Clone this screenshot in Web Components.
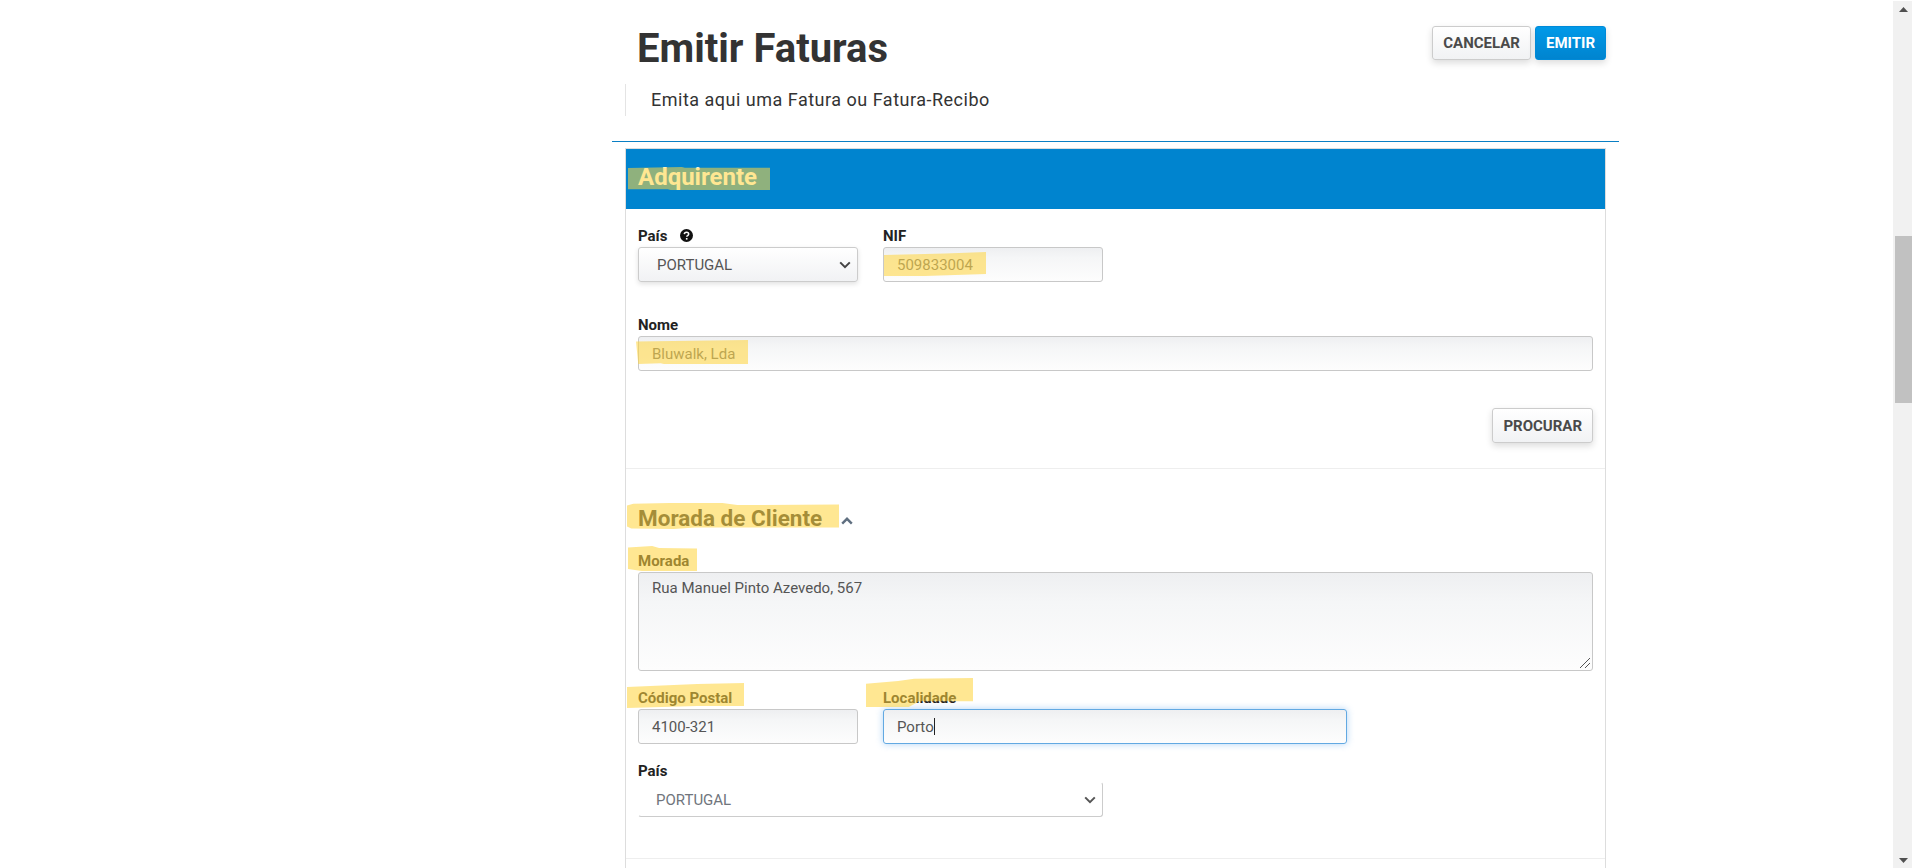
<!DOCTYPE html>
<html lang="pt">
<head>
<meta charset="utf-8">
<title>Emitir Faturas</title>
<style>
  html, body { margin: 0; padding: 0; height: 100%; background: #fff; overflow: hidden; }
  body { font-family: Roboto, "Liberation Sans", sans-serif; }
</style>
</head>
<body>
<app-page>
  <page-header title="Emitir Faturas" subtitle="Emita aqui uma Fatura ou Fatura-Recibo">
    <ui-button>Cancelar</ui-button>
    <ui-button primary>Emitir</ui-button>
  </page-header>

  <form-card heading="Adquirente">
    <form-row top="16">
      <form-field label="País" help width="220"><select-box>PORTUGAL</select-box></form-field>
      <form-field label="NIF" width="220"><text-box muted>509833004</text-box></form-field>
    </form-row>
    <form-row top="32">
      <form-field label="Nome" grow><text-box muted>Bluwalk, Lda</text-box></form-field>
    </form-row>
    <form-actions><ui-button tall>Procurar</ui-button></form-actions>

    <section-title>Morada de Cliente</section-title>
    <form-row top="17">
      <form-field label="Morada" grow><text-area-box>Rua Manuel Pinto Azevedo, 567</text-area-box></form-field>
    </form-row>
    <form-row top="16">
      <form-field label="Código Postal" width="220"><text-box>4100-321</text-box></form-field>
      <form-field label="Localidade" width="464"><text-box focused>Porto</text-box></form-field>
    </form-row>
    <form-row top="16">
      <form-field label="País" width="465"><select-box flat>PORTUGAL</select-box></form-field>
    </form-row>
    <form-rule></form-rule>
  </form-card>

  <mark-stroke slot="marks" x="628" y="167" w="142" h="23" points="0 4,38 0,40 3,100 3,100 100,30 100,28 97,0 97"></mark-stroke>
  <mark-stroke slot="marks" x="884" y="252" w="102" h="24" points="0 12,60 6,100 0,100 92,40 100,0 100"></mark-stroke>
  <mark-stroke slot="marks" x="636" y="340" w="112" h="24" points="0 6,100 0,100 100,25 100,22 97,2 100"></mark-stroke>
  <mark-stroke slot="marks" x="627" y="503" w="212" h="26" points="0 10,3 3,20 0,45 0,52 8,100 6,100 94,32 94,22 100,2 98,0 90"></mark-stroke>
  <mark-stroke slot="marks" x="628" y="546" w="69" h="25" points="0 6,35 0,45 8,100 10,100 100,20 100,0 92"></mark-stroke>
  <mark-stroke slot="marks" x="627" y="683" w="117" h="25" points="0 16,60 4,100 0,100 92,60 92,0 100"></mark-stroke>
  <mark-stroke slot="marks" x="866" y="678" w="107" h="29" points="0 20,30 10,45 3,100 0,100 80,50 80,40 100,0 100"></mark-stroke>
</app-page>

<script>
const FONT = 'Roboto, "Liberation Sans", sans-serif';

class AppPage extends HTMLElement {
    constructor() {
        super();
        this.attachShadow({ mode: 'open' });
    }
    connectedCallback() {
        this.shadowRoot.innerHTML = `
            <style>
                :host { display: flex; height: 868px; overflow: hidden; position: relative; font-family: ${FONT}; }
                .content { flex: 1; min-width: 0; }
                .column { width: 981px; margin-left: 612px; padding: 0 13px; }
            </style>
            <div class="content"><div class="column"><slot></slot></div></div>
            <fake-scrollbar></fake-scrollbar>
            <slot name="marks"></slot>
        `;
    }
}
customElements.define('app-page', AppPage);

class PageHeader extends HTMLElement {
    constructor() {
        super();
        this.attachShadow({ mode: 'open' });
    }
    connectedCallback() {
        this.shadowRoot.innerHTML = `
            <style>
                :host { display: block; height: 141px; margin: 0 -13px 6px; padding: 0 13px; border-bottom: 1px solid #0a7fc4; }
                .top { display: flex; justify-content: space-between; height: 84px; }
                h1 { margin: 0; padding: 26px 0 0 12px; font-size: 40px; line-height: 46px; font-weight: 700; color: #333; }
                .actions { display: flex; gap: 4px; padding-top: 26px; height: 34px; }
                p { margin: 0; height: 32px; line-height: 32px; border-left: 1px solid #e4e4e4; padding-left: 25px; font-size: 18px; color: #333; letter-spacing: .5px; }
            </style>
            <div class="top">
                <h1>${this.getAttribute('title')}</h1>
                <div class="actions"><slot></slot></div>
            </div>
            <p>${this.getAttribute('subtitle')}</p>
        `;
    }
}
customElements.define('page-header', PageHeader);

class UiButton extends HTMLElement {
    constructor() {
        super();
        this.attachShadow({ mode: 'open' });
    }
    connectedCallback() {
        this.shadowRoot.innerHTML = `
            <style>
                :host { display: inline-flex; align-items: center; height: 34px; padding: 0 10px; box-sizing: border-box; border: 1px solid #ccc; border-radius: 3px;
                    background: linear-gradient(#fff, #f1f2f4); box-shadow: 0 3px 7px rgba(0,0,0,.14);
                    font-size: 15px; font-weight: 700; text-transform: uppercase; color: #4a4a4a; }
                :host([tall]) { height: 35px; }
                :host([primary]) { background: linear-gradient(#0099e8, #0084cf); border-color: #008ad8; color: #fff; }
            </style>
            <slot></slot>
        `;
    }
}
customElements.define('ui-button', UiButton);

class FormCard extends HTMLElement {
    constructor() {
        super();
        this.attachShadow({ mode: 'open' });
    }
    connectedCallback() {
        this.shadowRoot.innerHTML = `
            <style>
                :host { display: block; border: 1px solid #ddd; border-bottom: 0; }
                header { height: 60px; background: #0084cf; color: #fff; font-size: 24px; font-weight: 700; line-height: 56px; padding-left: 12px; }
                .body { padding: 0 12px; }
            </style>
            <header>${this.getAttribute('heading')}</header>
            <div class="body"><slot></slot></div>
        `;
    }
}
customElements.define('form-card', FormCard);

class FormRow extends HTMLElement {
    constructor() {
        super();
        this.attachShadow({ mode: 'open' });
    }
    connectedCallback() {
        const top = this.getAttribute('top') || 0;
        this.shadowRoot.innerHTML = `
            <style>
                :host { display: flex; gap: 25px; padding-top: ${top}px; }
            </style>
            <slot></slot>
        `;
    }
}
customElements.define('form-row', FormRow);

class FormField extends HTMLElement {
    constructor() {
        super();
        this.attachShadow({ mode: 'open' });
    }
    connectedCallback() {
        const width = this.getAttribute('width');
        const help = this.hasAttribute('help') ? `
            <svg width="13" height="13" viewBox="0 0 13 13" aria-hidden="true">
                <circle cx="6.5" cy="6.5" r="6.5" fill="#111"/>
                <path d="M4.3 5.1c.1-1.2 1-1.9 2.2-1.9s2.2.7 2.2 1.8c0 .9-.5 1.3-1.1 1.7-.5.3-.8.6-.8 1.1" fill="none" stroke="#fff" stroke-width="1.5"/>
                <rect x="5.9" y="9" width="1.6" height="1.6" fill="#fff"/>
            </svg>` : '';
        this.shadowRoot.innerHTML = `
            <style>
                :host { display: block; ${width ? `flex: 0 0 ${width}px;` : 'flex: 1;'} }
                label { display: flex; align-items: center; gap: 13px; height: 21px; margin-bottom: 1px; font-size: 15px; font-weight: 700; color: #222; }
            </style>
            <label>${this.getAttribute('label')}${help}</label>
            <slot></slot>
        `;
    }
}
customElements.define('form-field', FormField);

const INSET = 'linear-gradient(#eeeff1, #f5f6f7 30%, #fdfdfd)';

class TextBox extends HTMLElement {
    constructor() {
        super();
        this.attachShadow({ mode: 'open' });
    }
    connectedCallback() {
        const focused = this.hasAttribute('focused');
        this.shadowRoot.innerHTML = `
            <style>
                :host { display: flex; align-items: center; height: 35px; padding: 0 10px 0 13px; box-sizing: border-box; border: 1px solid #c8c8c8; border-radius: 3px;
                    background: ${INSET}; font-size: 15px; color: #555; }
                :host([muted]) { color: #6a6a6a; }
                :host([focused]) { border-color: #62a9e2; box-shadow: 0 0 7px rgba(80,160,235,.45); }
                i { display: inline-block; width: 1px; height: 17px; background: #222; }
            </style>
            <slot></slot>${focused ? '<i></i>' : ''}
        `;
    }
}
customElements.define('text-box', TextBox);

class TextAreaBox extends HTMLElement {
    constructor() {
        super();
        this.attachShadow({ mode: 'open' });
    }
    connectedCallback() {
        this.shadowRoot.innerHTML = `
            <style>
                :host { display: block; position: relative; height: 99px; padding: 5px 13px; box-sizing: border-box; border: 1px solid #c8c8c8; border-radius: 3px;
                    background: ${INSET}; font-size: 15px; line-height: 20px; color: #555; }
                svg { position: absolute; right: 2px; bottom: 2px; }
            </style>
            <slot></slot>
            <svg width="10" height="10" viewBox="0 0 10 10" aria-hidden="true">
                <path d="M0 10 10 0M5 10 10 5" stroke="#555" stroke-width="1" fill="none"/>
            </svg>
        `;
    }
}
customElements.define('text-area-box', TextAreaBox);

class SelectBox extends HTMLElement {
    constructor() {
        super();
        this.attachShadow({ mode: 'open' });
    }
    connectedCallback() {
        this.shadowRoot.innerHTML = `
            <style>
                :host { display: flex; align-items: center; justify-content: space-between; height: 35px; padding: 0 6px 0 18px; box-sizing: border-box; border: 1px solid #ccc; border-radius: 3px;
                    background: linear-gradient(#fff, #f1f2f4); box-shadow: 0 2px 5px rgba(0,0,0,.12); font-size: 15px; color: #555; }
                :host([flat]) { background: #fff; border-top-color: transparent; border-left-color: transparent; box-shadow: none; color: #70757c; padding-left: 17px; }
                :host([flat]) path { stroke: #555; }
            </style>
            <slot></slot>
            <svg width="12" height="8" viewBox="0 0 12 8" aria-hidden="true">
                <path d="M1.2 1.4 6 6.2l4.8-4.8" fill="none" stroke="#444" stroke-width="2"/>
            </svg>
        `;
    }
}
customElements.define('select-box', SelectBox);

class FormActions extends HTMLElement {
    constructor() {
        super();
        this.attachShadow({ mode: 'open' });
    }
    connectedCallback() {
        this.shadowRoot.innerHTML = `
            <style>
                :host { display: flex; justify-content: flex-end; padding: 37px 12px 25px; margin: 0 -12px; border-bottom: 1px solid #eee; }
            </style>
            <slot></slot>
        `;
    }
}
customElements.define('form-actions', FormActions);

class SectionTitle extends HTMLElement {
    constructor() {
        super();
        this.attachShadow({ mode: 'open' });
    }
    connectedCallback() {
        this.shadowRoot.innerHTML = `
            <style>
                :host { display: flex; gap: 19px; padding-top: 34px; height: 30px; font-size: 22.5px; line-height: 30px; font-weight: 700; color: #333; }
                svg { margin-top: 14px; }
            </style>
            <slot></slot>
            <svg width="12" height="8" viewBox="0 0 12 8" aria-hidden="true">
                <path d="M1.2 6.6 6 1.8l4.8 4.8" fill="none" stroke="#5f6f80" stroke-width="2.4"/>
            </svg>
        `;
    }
}
customElements.define('section-title', SectionTitle);

class FormRule extends HTMLElement {
    constructor() {
        super();
        this.attachShadow({ mode: 'open' });
    }
    connectedCallback() {
        this.shadowRoot.innerHTML = `
            <style>
                :host { display: block; margin: 41px -12px 0; height: 9px; border-top: 1px solid #eee; }
            </style>
        `;
    }
}
customElements.define('form-rule', FormRule);

// marcador amarelo por cima do texto, como no print original
class MarkStroke extends HTMLElement {
    constructor() {
        super();
        this.attachShadow({ mode: 'open' });
    }
    connectedCallback() {
        const attr = n => this.getAttribute(n);
        const poly = attr('points').split(',').map(p => {
            const [x, y] = p.trim().split(' ');
            return `${x}% ${y}%`;
        }).join(', ');
        this.shadowRoot.innerHTML = `
            <style>
                :host { display: block; position: absolute; left: ${attr('x')}px; top: ${attr('y')}px; width: ${attr('w')}px; height: ${attr('h')}px;
                    background: rgba(255,212,60,.56); clip-path: polygon(${poly}); pointer-events: none; }
            </style>
        `;
    }
}
customElements.define('mark-stroke', MarkStroke);

class FakeScrollbar extends HTMLElement {
    constructor() {
        super();
        this.attachShadow({ mode: 'open' });
    }
    connectedCallback() {
        this.shadowRoot.innerHTML = `
            <style>
                :host { display: flex; flex-direction: column; flex: 0 0 19px; height: 867px; margin-top: 1px; background: #f1f1f1; position: relative; }
                .thumb { position: absolute; top: 235px; left: 2px; right: 0; height: 167px; background: #c1c1c1; }
                svg { position: absolute; left: 6px; }
            </style>
            <svg style="top:6px" width="9" height="5" viewBox="0 0 9 5"><path d="M4.5 0 9 5H0z" fill="#505050"/></svg>
            <div class="thumb"></div>
            <svg style="bottom:5px" width="9" height="5" viewBox="0 0 9 5"><path d="M0 0h9L4.5 5z" fill="#505050"/></svg>
        `;
    }
}
customElements.define('fake-scrollbar', FakeScrollbar);
</script>
</body>
</html>
